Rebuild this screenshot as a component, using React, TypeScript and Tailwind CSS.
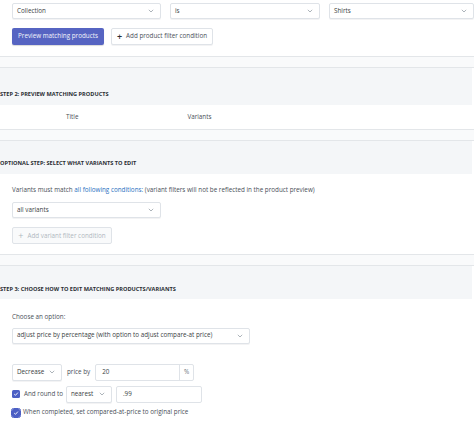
import React from "react";

const Chevron = () => (
  <svg width="6" height="4" viewBox="0 0 6 4" className="shrink-0">
    <path d="M0.8 0.8 L3 3 L5.2 0.8" fill="none" stroke="#8a939c" strokeWidth="0.7" />
  </svg>
);

const Select = ({ label, className }: { label: string; className: string }) => (
  <div
    className={`flex items-center justify-between rounded-[2px] border border-[#dfe3e8] bg-white pl-[4px] pr-[6px] shadow-[0_1px_0_rgba(22,29,37,0.05)] ${className}`}
  >
    <span className="text-[#3b3f44]">{label}</span>
    <Chevron />
  </div>
);

const Band = ({ title, h }: { title: string; h: string }) => (
  <div>
    <div className="h-[12px] border-y border-[#e3e6e9] bg-[#f9fafb]" />
    <div className={`mr-[2px] flex items-end bg-[#f4f6f8] pb-[7px] ${h}`}>
      <span className="text-[5.6px] font-bold uppercase text-[#2a2e33]">{title}</span>
    </div>
  </div>
);

const Check = ({ ring }: { ring?: boolean }) => (
  <div
    className={`flex h-[8px] w-[8px] shrink-0 items-center justify-center rounded-[1.5px] bg-[#4c5fc4] ${
      ring ? "outline outline-[1.5px] outline-offset-[0.5px] outline-[#4c5fc4]" : ""
    }`}
  >
    <svg width="6" height="6" viewBox="0 0 6 6">
      <path d="M1.2 3.1 L2.5 4.3 L4.9 1.6" fill="none" stroke="white" strokeWidth="0.9" />
    </svg>
  </div>
);

export default function App() {
  return (
    <div
      className="h-[422px] w-[474px] overflow-hidden bg-white text-[6.3px] leading-none text-[#3b3f44]"
      style={{ fontFamily: '"Open Sans", "Noto Sans", sans-serif' }}
    >
      <div className="pl-[12px] pt-[3px]">
        <div className="flex gap-[9px]">
          <Select label="Collection" className="h-[16px] w-[149px]" />
          <Select label="is" className="h-[16px] w-[150px]" />
          <Select label="Shirts" className="h-[16px] w-[145px]" />
        </div>
        <div className="mt-[9px] flex gap-[7px]">
          <button className="flex h-[17px] w-[92px] items-center justify-center rounded-[2px] bg-[#5664c2] text-[#f4f5fb] shadow-[0_1px_1px_rgba(0,0,0,0.15)]">
            Preview matching products
          </button>
          <button className="flex h-[17px] w-[102px] items-center justify-center gap-[4px] rounded-[2px] border border-[#dfe3e8] bg-white text-[#4a5058] shadow-[0_1px_0_rgba(22,29,37,0.05)]">
            <span className="text-[9px] font-semibold leading-none text-[#2a2e33]">+</span>
            <span>Add product filter condition</span>
          </button>
        </div>
      </div>

      <div className="mt-[11px]">
        <Band title="Step 2: Preview matching products" h="h-[37px]" />
      </div>
      <div className="flex h-[24px] items-center">
        <span className="ml-[66px] text-[#4a5058]">Title</span>
        <span className="ml-[109px] text-[#4a5058]">Variants</span>
      </div>

      <Band title="Optional step: select what variants to edit" h="h-[33px]" />

      <div className="pl-[12px] pt-[13px]">
        <div className="text-[#4a5058]">
          Variants must match <span className="text-[#2a6fc0]">all following conditions:</span> (variant filters will
          not be reflected in the product preview)
        </div>
        <Select label="all variants" className="mt-[9px] h-[16px] w-[149px]" />
        <button className="mt-[9px] flex h-[17px] w-[100px] items-center justify-center gap-[4px] rounded-[2px] border border-[#dfe3e8] bg-[#f9fafb] text-[#b0b8c0]">
          <span className="text-[9px] leading-none">+</span>
          <span>Add variant filter condition</span>
        </button>
      </div>

      <div className="mt-[10px]">
        <Band title="Step 3: Choose how to edit matching products/variants" h="h-[33px]" />
      </div>

      <div className="pl-[12px] pt-[15px]">
        <div className="text-[#4a5058]">Choose an option:</div>
        <Select
          label="adjust price by percentage (with option to adjust compare-at price)"
          className="mt-[7px] h-[16px] w-[238px]"
        />
        <div className="mt-[20px] flex items-center gap-[5px]">
          <Select label="Decrease" className="h-[17px] w-[50px]" />
          <span className="text-[#4a5058]">price by</span>
          <div className="flex h-[17px] w-[99px] rounded-[2px] border border-[#dfe3e8] bg-white">
            <div className="flex flex-1 items-center pl-[6px]">20</div>
            <div className="flex w-[14px] items-center justify-center border-l border-[#dfe3e8] text-[#6b737b]">%</div>
          </div>
        </div>
        <div className="mt-[5px] flex items-center">
          <Check />
          <span className="ml-[4px] text-[#4a5058]">And round to</span>
          <Select label="nearest" className="ml-[3px] h-[17px] w-[46px]" />
          <div className="ml-[4px] flex h-[17px] w-[86px] items-center rounded-[2px] border border-[#dfe3e8] bg-white pl-[6px]">
            .99
          </div>
        </div>
        <div className="mt-[6px] flex items-center">
          <Check ring />
          <span className="ml-[3px] text-[#4a5058]">When completed, set compared-at-price to original price</span>
        </div>
      </div>
    </div>
  );
}
